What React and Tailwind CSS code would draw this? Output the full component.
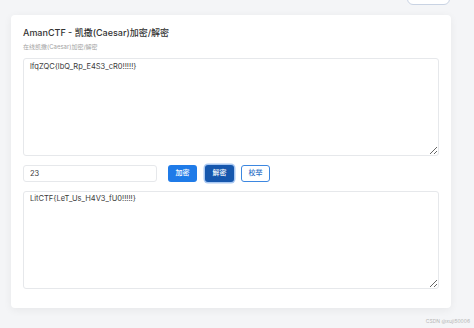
import React, { useState } from 'react';

const font = { fontFamily: '"Inter", "Noto Sans CJK SC", sans-serif' };

const App = () => {
    const [cipher, setCipher] = useState('lfqZQC{lbQ_Rp_E4S3_cR0!!!!!}');
    const [shift, setShift] = useState('23');
    const [plain, setPlain] = useState('LitCTF{LeT_Us_H4V3_fU0!!!!!}');

    return (
        <div className="relative w-[474px] h-[328px] overflow-hidden bg-[#f4f5f7]" style={font}>
            {/* partial button at top right */}
            <div className="absolute right-[24px] top-[-12px] w-[43px] h-[17px] rounded-[6px] border border-[#c9d3e3] bg-white" />

            <div className="pt-[15px] pl-[11px]">
                <div className="w-[440px] h-[293px] bg-white rounded-[4px] shadow-[0_2px_8px_rgba(0,0,0,0.06)] px-[12px] pt-[12px]">
                    <h1 className="text-[9px] font-medium text-[#333] leading-[12px]">AmanCTF - 凯撒(Caesar)加密/解密</h1>
                    <p className="text-[6px] text-[#a3a3a3] leading-[8px] mt-[4px]">在线凯撒(Caesar)加密/解密</p>

                    <textarea
                        value={cipher}
                        onChange={e => setCipher(e.target.value)}
                        className="block mt-[7px] w-[416px] h-[98px] border border-[#e6e8eb] rounded-[3px] px-[6px] py-[3px] text-[7.5px] text-[#3a3a3a] leading-[10px] outline-none"
                        style={font}
                    />

                    <div className="flex items-center mt-[9px]">
                        <input
                            value={shift}
                            onChange={e => setShift(e.target.value)}
                            className="w-[134px] h-[17px] border border-[#e6e8eb] rounded-[3px] px-[6px] text-[7.5px] text-[#3a3a3a] outline-none"
                            style={font}
                        />
                        <button className="ml-[11px] w-[29px] h-[17px] rounded-[3px] bg-[#1f7be8] text-white text-[7px] font-medium">加密</button>
                        <button className="ml-[8px] w-[29px] h-[17px] rounded-[3px] bg-[#1657ad] text-white text-[7px] font-medium ring-[1.5px] ring-[#a9c8f2]">解密</button>
                        <button className="ml-[7px] w-[29px] h-[17px] rounded-[3px] bg-white border border-[#3d87e0] text-[#2a6fc6] text-[7px] font-medium">校举</button>
                    </div>

                    <textarea
                        value={plain}
                        onChange={e => setPlain(e.target.value)}
                        className="block mt-[9px] w-[416px] h-[98px] border border-[#e6e8eb] rounded-[3px] px-[6px] py-[2px] text-[7.5px] text-[#3a3a3a] leading-[10px] outline-none"
                        style={font}
                    />
                </div>
            </div>

            <div className="absolute right-[4px] bottom-[3px] text-[5px] text-[#b5b5b5]">CSDN @xuji50006</div>
        </div>
    );
};

export default App;
